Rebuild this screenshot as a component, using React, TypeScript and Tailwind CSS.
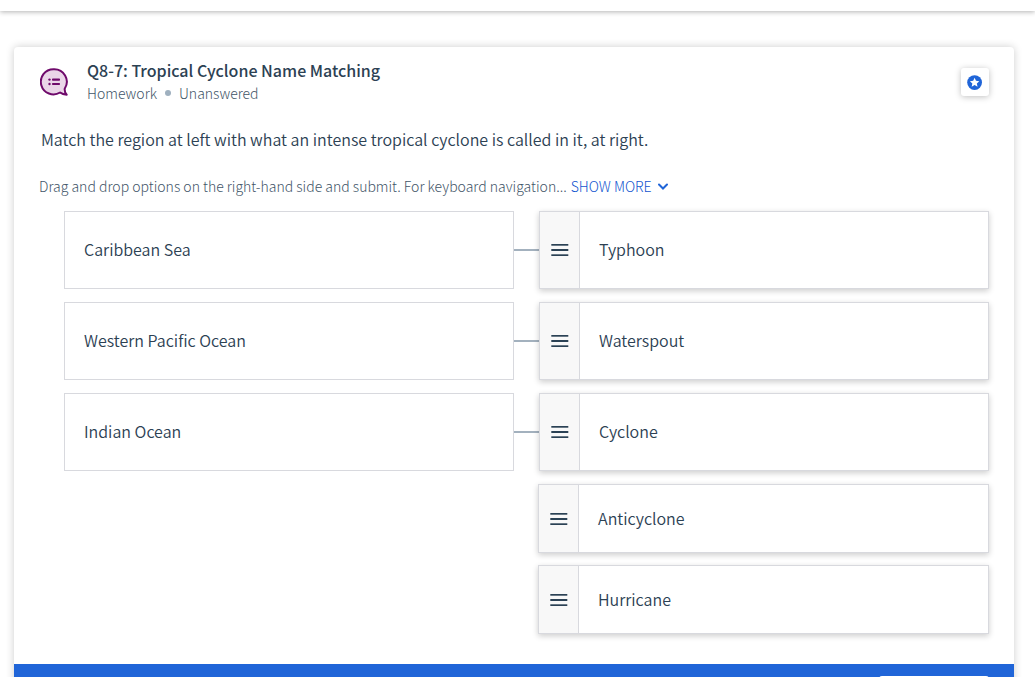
import React from 'react';

const regions = ['Caribbean Sea', 'Western Pacific Ocean', 'Indian Ocean'];
const matched = ['Typhoon', 'Waterspout', 'Cyclone'];
const unmatched = ['Anticyclone', 'Hurricane'];

function QuestionIcon() {
  return (
    <svg className="h-7 w-7" viewBox="0 0 28 28" fill="none" aria-hidden="true">
      <path
        d="M13.5 1.2a12.6 12.6 0 1 0 6.6 23.3c1.6 1.2 3.9 2 6.6 2.2-1.6-1.7-2.2-3.7-2-6A12.6 12.6 0 0 0 13.5 1.2Z"
        fill="#ead6e8"
        stroke="#6f0a6b"
        strokeWidth="2"
        strokeLinejoin="round"
      />
      <g fill="#6f0a6b">
        <circle cx="9.5" cy="11.6" r="1.2" />
        <circle cx="9.5" cy="16" r="1.2" />
        <rect x="12" y="10.5" width="8" height="2.2" rx="0.8" />
        <rect x="12" y="14.9" width="8" height="2.2" rx="0.8" />
      </g>
    </svg>
  );
}

function StarIcon() {
  return (
    <svg className="h-4 w-4" viewBox="0 0 16 16" aria-hidden="true">
      <circle cx="7.6" cy="8.6" r="7.4" fill="#2065d8" />
      <path
        d="m7.6 3.8 1.4 3 3.3.35-2.45 2.25.7 3.3L7.6 11l-2.95 1.7.7-3.3L2.9 7.15l3.3-.35 1.4-3Z"
        fill="#fff"
      />
    </svg>
  );
}

function OptionCard({ label, height }: { label: string; height: string }) {
  return (
    <li className={`flex border border-[#d8d9de] bg-white shadow-[0_2px_6px_rgba(0,0,0,0.2)] ${height}`}>
      <button
        type="button"
        aria-label={`Move ${label}`}
        className="flex w-10 shrink-0 cursor-grab items-center justify-center border-r border-[#d8d9de] bg-[#f8f8f8]"
      >
        <svg className="h-3 w-[18px]" viewBox="0 0 18 12" fill="#2b4255" aria-hidden="true">
          <rect x="0.3" y="0" width="17" height="1.7" />
          <rect x="0.3" y="5" width="17" height="2" />
          <rect x="0.3" y="10.3" width="17" height="1.7" />
        </svg>
      </button>
      <span className="flex items-center px-[19px] pb-0.5">{label}</span>
    </li>
  );
}

export default function App() {
  return (
    <div className="flex h-screen flex-col overflow-hidden bg-white font-['Noto_Sans_CJK_SC',sans-serif] text-base font-[350] text-[#2c4153]">
      <header className="h-[11px] shrink-0 bg-white shadow-[0_1px_5px_rgba(0,0,0,0.3)]" />

      <main className="mt-9 mr-[21px] ml-[14px] shrink-0 rounded-t-sm bg-white shadow-[0_0_8px_rgba(0,0,0,0.2)]">
        <div className="flex items-start pt-3 pr-[25px] pl-[26px]">
          <div className="mt-[9px] shrink-0">
            <QuestionIcon />
          </div>
          <div className="ml-[19px] flex-1">
            <h1 className="text-base leading-[22px] font-medium">Q8-7: Tropical Cyclone Name Matching</h1>
            <p className="flex items-center text-sm leading-6 font-light text-[#3f5568]">
              Homework
              <span className="mx-2 h-1.5 w-1.5 rounded-full bg-[#9fb0bf]" />
              Unanswered
            </p>
          </div>
          <button
            type="button"
            aria-label="Bookmark question"
            className="mt-[9px] flex h-7 w-7 items-center justify-center rounded-[3px] bg-white shadow-[0_1px_6px_rgba(0,0,0,0.25)]"
          >
            <StarIcon />
          </button>
        </div>

        <p className="mt-[22px] px-[27px] leading-6">
          Match the region at left with what an intense tropical cyclone is called in it, at right.
        </p>

        <div className="mt-[25px] flex items-center px-[25px] text-sm leading-5 font-light text-[#3f5568]">
          <span>Drag and drop options on the right-hand side and submit. For keyboard navigation...</span>
          <button type="button" className="ml-1 flex items-center text-[#1255cf]">
            SHOW MORE
            <svg className="ml-1.5 h-2.5 w-2.5" viewBox="0 0 10 10" fill="none" aria-hidden="true">
              <path d="m1 3.5 4 4 4-4" stroke="#2065d8" strokeWidth="2" strokeLinecap="round" />
            </svg>
          </button>
        </div>

        <div className="mt-[15px] flex pr-[25px] pb-[30px] pl-[50px]">
          <ul className="flex flex-1 flex-col gap-[13px]">
            {regions.map(region => (
              <li key={region} className="flex h-[78px] items-center border border-[#d8d9de] px-[19px] pb-0.5">
                {region}
              </li>
            ))}
          </ul>
          <div className="flex w-[25px] flex-col gap-[13px]">
            {regions.map(region => (
              <div key={region} className="flex h-[78px] items-center">
                <span className="h-0.5 w-full bg-[#a3b1be]" />
              </div>
            ))}
          </div>
          <div className="flex-1">
            <ul className="flex flex-col gap-[13px]">
              {matched.map(label => (
                <OptionCard key={label} label={label} height="h-[78px]" />
              ))}
            </ul>
            <ul className="mt-[13px] -ml-px flex flex-col gap-3">
              {unmatched.map(label => (
                <OptionCard key={label} label={label} height="h-[69px]" />
              ))}
            </ul>
          </div>
        </div>

        <footer className="flex justify-end bg-[#2065d8] px-[25px] py-3">
          <button type="button" aria-label="Submit" className="h-9 w-[110px] rounded-[3px] bg-white" />
        </footer>
      </main>
    </div>
  );
}
